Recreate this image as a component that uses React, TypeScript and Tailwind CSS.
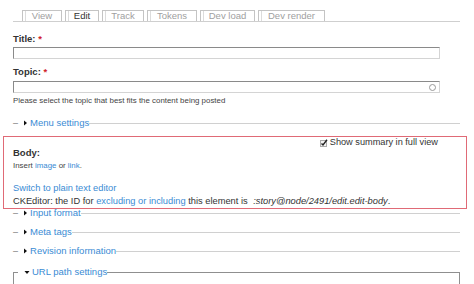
import React from "react";

const tabs = [
  { label: "View", w: "w-[40px]" },
  { label: "Edit", w: "w-[34px]", active: true },
  { label: "Track", w: "w-[42px]" },
  { label: "Tokens", w: "w-[50px]" },
  { label: "Dev load", w: "w-[55px]" },
  { label: "Dev render", w: "w-[67px]" },
];

function Legend({ label }: { label: string }) {
  // collapsed fieldset: dash, small arrow, link text, then the rule
  return (
    <div className="ml-[13px] w-[447px] flex items-center h-[12px]">
      <span className="text-[#777] text-[9px] leading-none">–</span>
      <svg width="5" height="6" viewBox="0 0 5 6" className="ml-[5px] mr-[2px]">
        <path d="M1 0.5 L4 3 L1 5.5 Z" fill="#111" />
      </svg>
      <a className="text-[#3a8bd4] text-[9.5px] leading-none">{label}</a>
      <div className="flex-1 h-[1px] bg-[#8f8f8f] mt-[1px] border-b border-[#d0d0d0]" />
    </div>
  );
}

export default function App() {
  return (
    <div className="w-[474px] h-[284px] overflow-hidden bg-white text-[#333] [font-family:'Liberation_Sans',Arial,sans-serif]">
      {/* Tabs */}
      <div className="pt-[10px] ml-[13px] w-[447px] border-b border-[#cfcfcf]">
        <ul className="flex gap-[3px] pl-[9px]">
          {tabs.map((t) => (
            <li
              key={t.label}
              className={`${t.w} h-[11px] border border-b-0 border-[#c4c4c4] bg-white shadow-[inset_2px_0_0_#fff,inset_3px_0_0_#dcdcdc] flex items-center justify-center text-[9.5px] leading-none ${
                t.active ? "text-[#333]" : "text-[#a0a0a0]"
              }`}
            >
              {t.label}
            </li>
          ))}
        </ul>
      </div>

      {/* Title */}
      <div className="ml-[13px] mt-[11px]">
        <label className="block h-[12px] leading-[12px] text-[9.5px] font-bold text-[#333]">
          Title: <span className="text-[#d0202a]">*</span>
        </label>
        <div className="mt-[2px] w-[427px] h-[12px] border border-[#d4d4d4] border-t-[#8a8a8a] border-l-[#8a8a8a]" />
      </div>

      {/* Topic */}
      <div className="ml-[13px] mt-[7px]">
        <label className="block h-[12px] leading-[12px] text-[9.5px] font-bold text-[#333]">
          Topic: <span className="text-[#d0202a]">*</span>
        </label>
        <div className="mt-[3px] w-[427px] h-[12px] border border-[#d4d4d4] border-t-[#8a8a8a] border-l-[#8a8a8a] flex items-center justify-end pr-[3px]">
          <span className="w-[7px] h-[7px] rounded-full border border-[#999]" />
        </div>
        <p className="mt-[3px] text-[7.9px] leading-[9px] text-[#444]">
          Please select the topic that best fits the content being posted
        </p>
      </div>

      <div className="mt-[12px]">
        <Legend label="Menu settings" />
      </div>

      {/* Body box */}
      <div className="ml-[3px] mt-[7px] w-[464px] h-[73px] border border-[#e06a76] pl-[9px] pr-[28px] pt-[1px]">
        <div className="flex justify-end items-center h-[9px]">
          <svg width="8" height="8" viewBox="0 0 8 8" className="mr-[2px]">
            <rect x="0.5" y="1.5" width="6" height="6" fill="#f4f4f4" stroke="#aaa" />
            <path d="M1.5 4.5 L3 6 L7 0.8" stroke="#222" strokeWidth="1.4" fill="none" />
          </svg>
          <span className="text-[9.2px] leading-none text-[#333]">Show summary in full view</span>
        </div>
        <div className="h-[12px] leading-[12px] text-[9.5px] font-bold text-[#333]">Body:</div>
        <div className="mt-[2px] text-[7.9px] leading-[9px] text-[#444]">
          Insert <a className="text-[#3a8bd4]">image</a> or <a className="text-[#3a8bd4]">link</a>.
        </div>
        <div className="mt-[12px] text-[9.3px] leading-[12px] text-[#3a8bd4]">Switch to plain text editor</div>
        <div className="mt-[1px] text-[9.3px] leading-[12px] text-[#333] whitespace-nowrap">
          CKEditor: the ID for <a className="text-[#3a8bd4]">excluding or including</a> this element is{" "}
          <span className="italic ml-[3px]">:story@node/2491/edit.edit-body</span>.
        </div>
      </div>

      <div className="mt-[-2px]">
        <Legend label="Input format" />
      </div>
      <div className="mt-[7px]">
        <Legend label="Meta tags" />
      </div>
      <div className="mt-[7px]">
        <Legend label="Revision information" />
      </div>

      {/* URL path settings (expanded) */}
      <div className="flow-root mt-[15px] ml-[13px] w-[447px] h-[30px] border-l border-r border-[#8f8f8f]">
        <div className="flex items-center h-[12px] -mt-[6px]">
          <div className="w-[4px] h-[1px] bg-[#8f8f8f] self-center" />
          <svg width="6" height="5" viewBox="0 0 6 5" className="ml-[6px] mr-[2px]">
            <path d="M0.5 1 L5.5 1 L3 4 Z" fill="#111" />
          </svg>
          <a className="text-[#3a8bd4] text-[9.5px] leading-none">URL path settings</a>
          <div className="flex-1 h-[1px] bg-[#8f8f8f] mt-[1px]" />
        </div>
      </div>
    </div>
  );
}
